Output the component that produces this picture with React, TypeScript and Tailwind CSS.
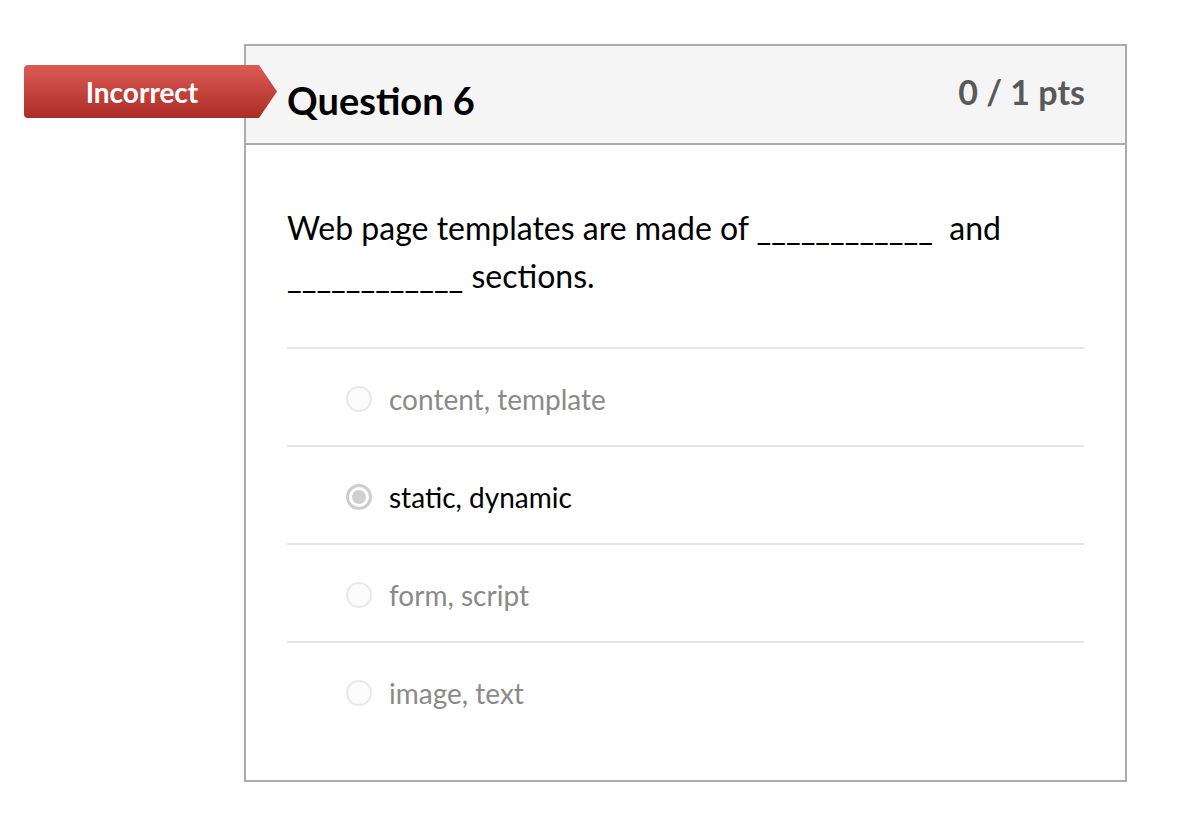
import React from "react";

const OPTIONS = [
  { label: "content, template", selected: false },
  { label: "static, dynamic", selected: true },
  { label: "form, script", selected: false },
  { label: "image, text", selected: false },
];

function Radio({ selected }: { selected: boolean }) {
  return (
    <span
      className={
        selected
          ? "flex size-[26px] shrink-0 items-center justify-center rounded-full border-[3px] border-[#cdcdcd] bg-white"
          : "flex size-[26px] shrink-0 items-center justify-center rounded-full border-2 border-[#e8e8e8] bg-[#fbfbfb]"
      }
    >
      {selected && <span className="size-[14px] rounded-full bg-[#cfcfcf]" />}
    </span>
  );
}

export default function App() {
  return (
    <div
      className="min-h-[822px] bg-white pt-[44px] pl-[244px]"
      style={{ fontFamily: "Lato, 'Open Sans', sans-serif" }}
    >
      <div className="relative w-[883px] border-2 border-[#ababab] bg-white">
        <div className="absolute top-[19px] left-[-222px] h-[53px] w-[253px] rounded-l-[4px] bg-gradient-to-b from-[#dc5a53] to-[#ab2c26] [clip-path:polygon(0_0,235px_0,100%_50%,235px_100%,0_100%)]">
          <div className="flex h-full w-[236px] items-center justify-center text-[28px] font-bold text-white">
            Incorrect
          </div>
        </div>

        <div className="flex h-[99px] items-start justify-between border-b-2 border-[#ababab] bg-[#f5f5f5] pr-[40px] pl-[41px]">
          <h2 className="pt-[30px] text-[38px] leading-[48px] font-bold text-black">
            Question 6
          </h2>
          <span className="pt-[24px] text-[34px] leading-[44px] font-bold text-[#595959]">
            0 / 1 pts
          </span>
        </div>

        <div className="px-[41px] pt-[59px] pb-[41px]">
          <p className="text-[32px] leading-[48px] text-black">
            Web page templates are made of ____________&nbsp; and
            <br />
            ____________ sections.
          </p>

          <div className="mt-[47px]">
            {OPTIONS.map((option) => (
              <div
                key={option.label}
                className="flex h-[98px] items-center gap-[17px] border-t-2 border-[#e6e6e6] pt-[3px] pl-[59px]"
              >
                <Radio selected={option.selected} />
                <span
                  className={
                    option.selected
                      ? "text-[28px] text-black"
                      : "text-[28px] text-[#8a8a8a]"
                  }
                >
                  {option.label}
                </span>
              </div>
            ))}
          </div>
        </div>
      </div>
    </div>
  );
}
